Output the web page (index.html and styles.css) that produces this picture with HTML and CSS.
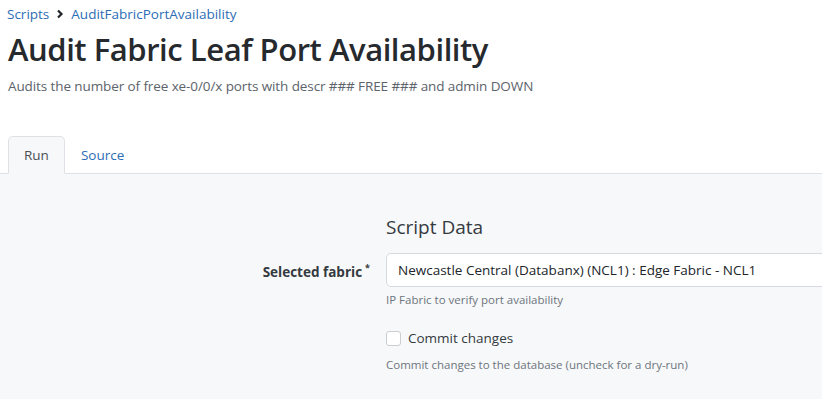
FILE: index.html
```html
<!doctype html>
<html>
<head>
<meta charset="utf-8">
<title>Audit Fabric Leaf Port Availability</title>
<link rel="stylesheet" href="styles.css">
</head>
<body>
<div class="header">
	<ol class="crumbs">
		<li><a href="#">Scripts</a></li>
		<li class="sep"><svg width="8" height="10" viewBox="0 0 8 10"><path d="M2 1.5 L5.5 5 L2 8.5" fill="none" stroke="#212529" stroke-width="2.2"/></svg></li>
		<li><a href="#">AuditFabricPortAvailability</a></li>
	</ol>
	<h1>Audit Fabric Leaf Port Availability</h1>
	<p class="desc">Audits the number of free xe-0/0/x ports with descr ### FREE ### and admin DOWN</p>
</div>

<ul class="tabs">
	<li class="active"><a href="#">Run</a></li>
	<li><a href="#">Source</a></li>
</ul>

<div class="panel">
	<div class="form">
		<div class="row">
			<div class="label"></div>
			<div class="field"><h5>Script Data</h5></div>
		</div>
		<div class="row">
			<label class="label">Selected fabric<sup>*</sup></label>
			<div class="field">
				<div class="select">Newcastle Central (Databanx) (NCL1) : Edge Fabric - NCL1</div>
				<div class="help">IP Fabric to verify port availability</div>
			</div>
		</div>
		<div class="row">
			<div class="label"></div>
			<div class="field">
				<label class="check"><span class="box"></span>Commit changes</label>
				<div class="help">Commit changes to the database (uncheck for a dry-run)</div>
			</div>
		</div>
	</div>
</div>
</body>
</html>
```

FILE: styles.css
```css
body { margin:0; font-family:"Open Sans", "Noto Sans", sans-serif; color:#212529; background:#fff; overflow:hidden; height:399px;}
a { text-decoration:none; color:#2d6db4;}
ol, ul { margin:0; padding:0; list-style:none;}

.header { padding:4px 8px 0 8px;}
.crumbs { display:flex; align-items:center; font-size:13.5px; line-height:20px; margin-left:-1px;}
.crumbs .sep { display:flex; width:22px; justify-content:center;}
h1 { margin:5px 0 0 0; font-size:31px; font-weight:600; line-height:40px; color:#26292d; letter-spacing:-0.45px;}
.desc { margin:7px 0 0 0; font-size:13.5px; line-height:20px; color:#5c636a; letter-spacing:-0.1px;}

.tabs { display:flex; margin-top:40px; padding-left:8px; border-bottom:1px solid #dee2e6;}
.tabs li { margin-bottom:-1px;}
.tabs a { display:block; padding:0 15px 0 15px; height:36px; line-height:37px; font-size:13.5px; border:1px solid transparent; border-radius:5px 5px 0 0;}
.tabs .active a { color:#4a5056; background:#f7f8f9; border-color:#dee2e6 #dee2e6 #f7f8f9;}

.panel { background:#f7f8f9; height:225px; box-sizing:border-box; padding-top:41px; overflow:hidden;}
.row { display:grid; grid-template-columns:370px 460px; column-gap:16px;}
.label { text-align:right; font-size:13.5px; font-weight:700; color:#343a40; padding-top:8px;}
.label sup { font-size:9px; margin-left:3px; vertical-align:6px;}
h5 { margin:0 0 14px 0; font-size:19px; font-weight:500; line-height:24px; color:#343a40;}
.select { height:32px; line-height:32px; border:1px solid #d6dade; border-radius:5px; background:#fff; padding-left:11px; font-size:13.5px; color:#212529; white-space:nowrap;}
.help { font-size:11.5px; line-height:16px; color:#6c757d; margin-top:5px;}
.row + .row + .row { margin-top:20px;}
.check { display:flex; align-items:center; font-size:13.5px; line-height:20px; color:#343a40;}
.box { width:13px; height:13px; border:1px solid #c9ced3; border-radius:3px; background:#fff; margin-right:7px;}
.check + .help { margin-top:9px;}
```
